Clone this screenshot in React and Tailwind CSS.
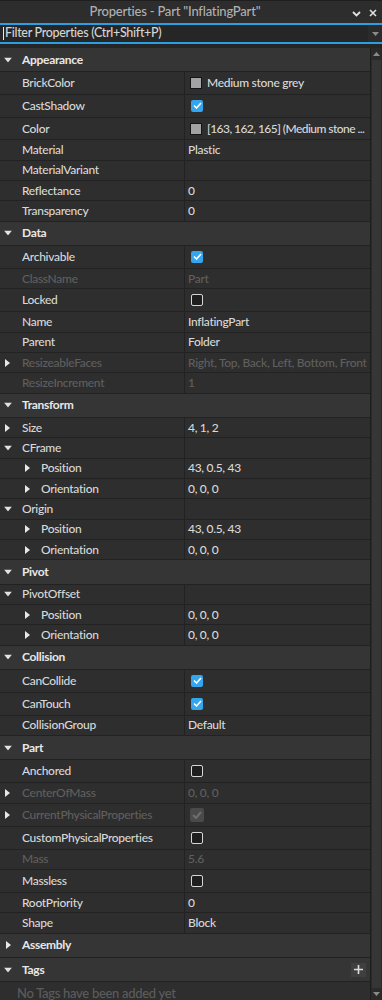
import React from "react";

const sections = [
  {
    title: "Appearance",
    rows: [
      { n: "BrickColor", v: "Medium stone grey", t: "swatch" },
      { n: "CastShadow", t: "check", on: true },
      { n: "Color", v: "[163, 162, 165] (Medium stone ...", t: "swatch", tight: true },
      { n: "Material", v: "Plastic" },
      { n: "MaterialVariant", v: "" },
      { n: "Reflectance", v: "0" },
      { n: "Transparency", v: "0" },
    ],
  },
  {
    title: "Data",
    rows: [
      { n: "Archivable", t: "check", on: true },
      { n: "ClassName", v: "Part", d: true },
      { n: "Locked", t: "check", on: false },
      { n: "Name", v: "InflatingPart" },
      { n: "Parent", v: "Folder" },
      { n: "ResizeableFaces", v: "Right, Top, Back, Left, Bottom, Front", d: true, e: "right" },
      { n: "ResizeIncrement", v: "1", d: true },
    ],
  },
  {
    title: "Transform",
    rows: [
      { n: "Size", v: "4, 1, 2", e: "right" },
      { n: "CFrame", v: "", e: "down" },
      { n: "Position", v: "43, 0.5, 43", e: "right", nest: true },
      { n: "Orientation", v: "0, 0, 0", e: "right", nest: true },
      { n: "Origin", v: "", e: "down" },
      { n: "Position", v: "43, 0.5, 43", e: "right", nest: true },
      { n: "Orientation", v: "0, 0, 0", e: "right", nest: true },
    ],
  },
  {
    title: "Pivot",
    rows: [
      { n: "PivotOffset", v: "", e: "down" },
      { n: "Position", v: "0, 0, 0", e: "right", nest: true },
      { n: "Orientation", v: "0, 0, 0", e: "right", nest: true },
    ],
  },
  {
    title: "Collision",
    rows: [
      { n: "CanCollide", t: "check", on: true },
      { n: "CanTouch", t: "check", on: true },
      { n: "CollisionGroup", v: "Default" },
    ],
  },
  {
    title: "Part",
    rows: [
      { n: "Anchored", t: "check", on: false },
      { n: "CenterOfMass", v: "0, 0, 0", d: true, e: "right" },
      { n: "CurrentPhysicalProperties", t: "dcheck", d: true, e: "right" },
      { n: "CustomPhysicalProperties", t: "check", on: false },
      { n: "Mass", v: "5.6", d: true },
      { n: "Massless", t: "check", on: false },
      { n: "RootPriority", v: "0" },
      { n: "Shape", v: "Block" },
    ],
  },
];

function TriDown({ className }) {
  return (
    <svg width="8" height="5" viewBox="0 0 8 5" className={className}>
      <path d="M0 0H8L4 5Z" fill="#e2e2e2" />
    </svg>
  );
}

function TriRight({ className }) {
  return (
    <svg width="5" height="8" viewBox="0 0 5 8" className={className}>
      <path d="M0 0V8L5 4Z" fill="#e8e8e8" />
    </svg>
  );
}

function Check({ on, disabled }) {
  if (disabled) {
    return (
      <div className="ml-[2px] w-[14px] h-[14px] shrink-0 rounded-[2px] bg-[#4a4a4a] flex items-center justify-center">
        <svg width="10" height="8" viewBox="0 0 10 8">
          <path d="M1 4L4 7L9 1" stroke="#6e6e6e" strokeWidth="2" fill="none" />
        </svg>
      </div>
    );
  }
  if (on) {
    return (
      <div className="ml-[3px] w-[12px] h-[12px] shrink-0 rounded-[2px] bg-[#35a5ee] flex items-center justify-center">
        <svg width="9" height="7" viewBox="0 0 9 7">
          <path d="M1 3.5L3.5 6L8 1" stroke="#ffffff" strokeWidth="1.6" fill="none" />
        </svg>
      </div>
    );
  }
  return (
    <div className="ml-[3px] w-[12px] h-[12px] shrink-0 rounded-[2px] border-[1.5px] border-[#d6d6d6] bg-[#1e1e1e]" />
  );
}

function Row({ r }) {
  const h =
    r.t === "check" || r.t === "dcheck"
      ? "h-[23px]"
      : r.t === "swatch"
      ? "h-[22.5px]"
      : "h-[20.35px]";
  const txt = r.d ? "text-[#5f5f5f]" : "text-[#d8d8d8]";
  return (
    <div className={`${h} flex border-b border-[#222222] bg-[#2e2e2e]`}>
      <div
        className={`relative w-[185px] shrink-0 border-r border-[#222222] flex items-center ${
          r.nest ? "pl-[41px]" : "pl-[22px]"
        } ${txt} whitespace-nowrap overflow-hidden`}
      >
        {r.e === "right" && (
          <TriRight className={`absolute ${r.nest ? "left-[25px]" : "left-[5px]"} top-1/2 -translate-y-1/2`} />
        )}
        {r.e === "down" && (
          <TriDown className={`absolute ${r.nest ? "left-[24px]" : "left-[4px]"} top-1/2 -translate-y-1/2`} />
        )}
        {r.n}
      </div>
      <div className={`flex-1 min-w-0 flex items-center pl-[3px] ${txt} whitespace-nowrap overflow-hidden`}>
        {r.t === "check" && <Check on={r.on} />}
        {r.t === "dcheck" && <Check disabled />}
        {r.t === "swatch" && (
          <>
            <div className="ml-[2px] w-[12px] h-[12px] shrink-0 border border-[#151515] bg-[#a3a2a5] mr-[5px]" />
            <span className={r.tight ? "tracking-[-0.55px]" : ""}>{r.v}</span>
          </>
        )}
        {!r.t && r.v}
      </div>
    </div>
  );
}

function Header({ title, collapsed, plus }) {
  return (
    <div className="relative h-[24.25px] flex items-center pl-[22px] bg-[#353535] border-b border-[#222222] font-bold text-[#e8e8e8]">
      {collapsed ? (
        <TriRight className="absolute left-[6px] top-1/2 -translate-y-1/2" />
      ) : (
        <TriDown className="absolute left-[4px] top-1/2 -translate-y-1/2" />
      )}
      {title}
      {plus && (
        <div className="absolute right-[4px] top-1/2 -translate-y-1/2 w-[15px] h-[14px] bg-[#3f3f3f] flex items-center justify-center">
          <svg width="9" height="9" viewBox="0 0 9 9">
            <path d="M4.5 0V9M0 4.5H9" stroke="#dcdcdc" strokeWidth="1.6" />
          </svg>
        </div>
      )}
    </div>
  );
}

export default function App() {
  return (
    <div
      className="w-[382px] h-[1000px] overflow-hidden bg-[#2e2e2e] text-[12px] font-medium tracking-[-0.3px] flex flex-col"
      style={{ fontFamily: "Lato, 'Noto Sans', sans-serif" }}
    >
      {/* Title bar */}
      <div className="relative h-[23px] shrink-0 flex items-center bg-[#2d2d2d] border-t border-[#1e1e1e]">
        <div className="w-[350px] text-center text-[13px] tracking-[-0.2px] text-[#b0b0b0]">Properties - Part "InflatingPart"</div>
        <svg width="9" height="6" viewBox="0 0 9 6" className="absolute left-[352px] top-[10px]">
          <path d="M1 1L4.5 4.5L8 1" stroke="#e0e0e0" strokeWidth="1.8" fill="none" />
        </svg>
        <svg width="8" height="8" viewBox="0 0 8 8" className="absolute left-[369px] top-[8px]">
          <path d="M1 1L7 7M7 1L1 7" stroke="#e0e0e0" strokeWidth="1.6" />
        </svg>
      </div>
      {/* Filter */}
      <div className="h-[21px] shrink-0 flex border-y-2 border-[#2a9fe2] bg-[#262626]">
        <div className="flex-1 flex items-center pl-[3px] text-[#d4d4d4] text-[12.5px]">
          <div className="w-[1px] h-[13px] bg-[#e8e8e8] mr-[1px]" />
          Filter Properties (Ctrl+Shift+P)
        </div>
        <div className="w-[14px] flex items-center justify-center bg-[#2b2b2b]">
          <svg width="7" height="4" viewBox="0 0 7 4">
            <path d="M0 0H7L3.5 4Z" fill="#8a8a8a" />
          </svg>
        </div>
      </div>
      <div className="h-[4px] shrink-0 bg-[#252525]" />
      {/* Body */}
      <div className="flex-1 flex min-h-0">
        <div className="w-[371px] shrink-0 border-r border-[#1e1e1e] overflow-hidden">
          {sections.map((s) => (
            <div key={s.title}>
              <Header title={s.title} />
              {s.rows.map((r, i) => (
                <Row key={i} r={r} />
              ))}
            </div>
          ))}
          <Header title="Assembly" collapsed />
          <Header title="Tags" plus />
          <div className="h-[22px] flex items-center pl-[17px] text-[#5c5c5c] text-[13px]">
            No Tags have been added yet
          </div>
        </div>
        <div className="flex-1 flex flex-col bg-[#2a2a2a]">
          <div className="h-[12px] flex items-center justify-center">
            <svg width="7" height="4" viewBox="0 0 7 4">
              <path d="M0 4H7L3.5 0Z" fill="#8a8a8a" />
            </svg>
          </div>
          <div className="flex-1 mx-[1px] bg-[#363636]" />
          <div className="h-[12px] flex items-center justify-center">
            <svg width="7" height="4" viewBox="0 0 7 4">
              <path d="M0 0H7L3.5 4Z" fill="#8a8a8a" />
            </svg>
          </div>
        </div>
      </div>
    </div>
  );
}
